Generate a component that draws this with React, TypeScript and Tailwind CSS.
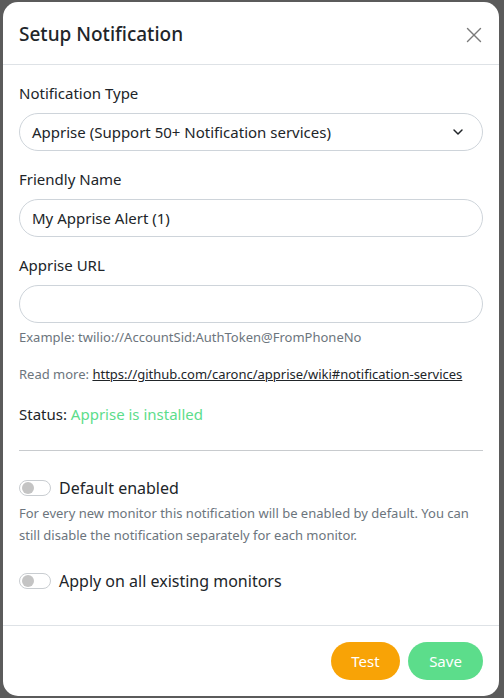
import { ChevronDown, X } from "lucide-react";

function Toggle({ label }: { label: string }) {
  return (
    <label className="flex items-center gap-2 text-[16px] text-[#212529]">
      <span className="flex h-[16px] w-[32px] items-center rounded-full border border-[#c9cdd1] bg-white px-[2px]">
        <span className="h-[12px] w-[12px] rounded-full bg-[#c4c4c4]" />
      </span>
      {label}
    </label>
  );
}

export default function App() {
  return (
    <div
      className="min-h-[698px] bg-[#5b5b5b] px-[3px] pt-[2px]"
      style={{ fontFamily: '"Noto Sans", sans-serif' }}
    >
      <div className="w-[496px] overflow-hidden rounded-[15px] bg-white">
        <div className="flex h-[63px] items-center justify-between border-b border-[#dee2e6] px-4 pt-[3px]">
          <h1 className="text-[19px] font-medium text-[#212529]">Setup Notification</h1>
          <X className="mr-[-4px] h-[26px] w-[26px] text-[#7a7a7a]" strokeWidth={1.3} />
        </div>

        <div className="px-4 pt-4 text-[#212529]">
          <div className="mb-2 text-[15px] leading-6">Notification Type</div>
          <div className="flex h-[38px] items-center justify-between rounded-full border border-[#ced4da] pl-3 pr-4 text-[15px]">
            <span>Apprise (Support 50+ Notification services)</span>
            <ChevronDown className="h-4 w-4" strokeWidth={2.2} />
          </div>

          <div className="mt-4 mb-2 text-[15px] leading-6">Friendly Name</div>
          <div className="flex h-[38px] items-center rounded-full border border-[#ced4da] px-3 text-[15px]">
            My Apprise Alert (1)
          </div>

          <div className="mt-4 mb-2 text-[15px] leading-6">Apprise URL</div>
          <div className="h-[38px] rounded-full border border-[#ced4da]" />

          <div className="mt-1 text-[13px] leading-[21px] text-[#6c757d]">
            Example: twilio://AccountSid:AuthToken@FromPhoneNo
          </div>
          <div className="mt-4 text-[13px] leading-[21px] text-[#6c757d]">
            Read more:{" "}
            <a className="text-[#212529] underline">
              https://github.com/caronc/apprise/wiki#notification-services
            </a>
          </div>
          <div className="mt-[17px] text-[15px] leading-6">
            Status: <span className="text-[#5cdd8b]">Apprise is installed</span>
          </div>

          <hr className="mt-[24px] border-[#c8cbce]" />

          <div className="mt-[25px]">
            <Toggle label="Default enabled" />
          </div>
          <p className="mt-[2px] text-[13px] leading-[22px] text-[#6c757d]">
            For every new monitor this notification will be enabled by default. You can still
            disable the notification separately for each monitor.
          </p>
          <div className="mt-[23px] pb-[32px]">
            <Toggle label="Apply on all existing monitors" />
          </div>
        </div>

        <div className="flex h-[71px] items-center justify-end gap-2 border-t border-[#dee2e6] px-4">
          <button className="h-[38px] w-[69px] rounded-full bg-[#f8a306] text-[15px] text-white">
            Test
          </button>
          <button className="h-[38px] w-[75px] rounded-full bg-[#5cdd8b] text-[15px] text-white">
            Save
          </button>
        </div>
      </div>
    </div>
  );
}
